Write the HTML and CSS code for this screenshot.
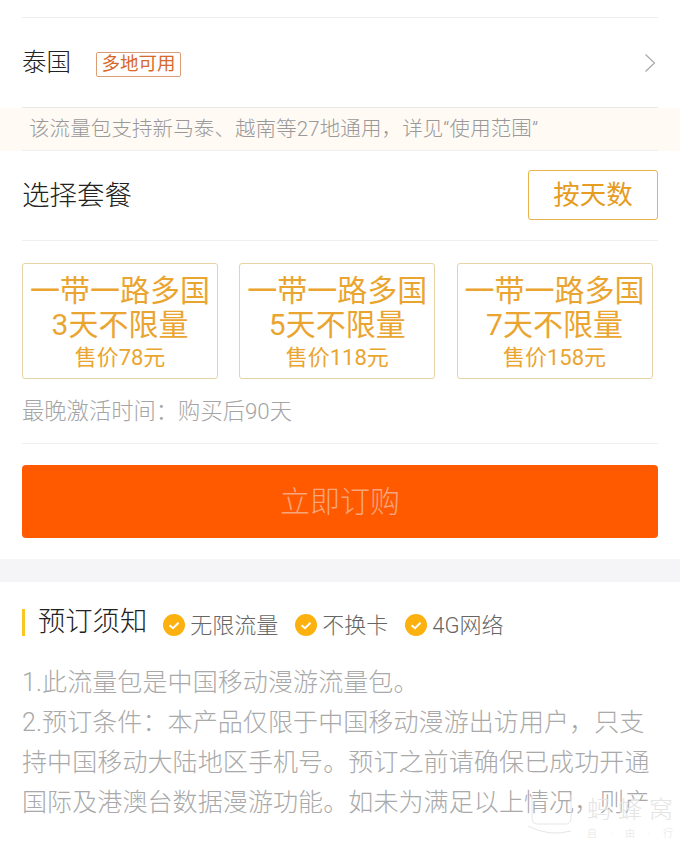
FILE: index.html
```html
<!DOCTYPE html>
<html lang="zh-CN">
<head>
<meta charset="utf-8">
<title>预订</title>
<link rel="stylesheet" href="styles.css">
</head>
<body>
<main class="page">
  <section class="panel">
    <div class="rule-top"></div>
    <div class="dest">
      <span class="dest-name">泰国</span>
      <span class="dest-tag">多地可用</span>
      <svg class="chev" width="12" height="20" viewBox="0 0 12 20"><path d="M1.5 1.5 10.5 10 1.5 18.5" fill="none" stroke="#a8a8a8" stroke-width="1.2"/></svg>
    </div>
    <div class="notice"><span>该流量包支持新马泰、越南等27地通用，详见“使用范围”</span></div>
    <div class="choose">
      <span class="choose-title">选择套餐</span>
      <span class="choose-btn">按天数</span>
    </div>
    <div class="plans">
      <div class="plan"><div class="plan-l1">一带一路多国</div><div class="plan-l2">3天不限量</div><div class="plan-l3">售价78元</div></div>
      <div class="plan"><div class="plan-l1">一带一路多国</div><div class="plan-l2">5天不限量</div><div class="plan-l3">售价118元</div></div>
      <div class="plan"><div class="plan-l1">一带一路多国</div><div class="plan-l2">7天不限量</div><div class="plan-l3">售价158元</div></div>
    </div>
    <div class="latest">最晚激活时间：购买后90天</div>
    <div class="order-wrap"><div class="order">立即订购</div></div>
  </section>
  <div class="gap"></div>
  <section class="notes">
    <div class="notes-head">
      <span class="notes-title">预订须知</span>
      <span class="feat"><svg class="tick" viewBox="0 0 22 22"><circle cx="11" cy="11" r="11" fill="#fdb10f"/><path d="M6.5 11.2 10 14.2 15.5 8.8" fill="none" stroke="#fff" stroke-width="2"/></svg>无限流量</span>
      <span class="feat"><svg class="tick" viewBox="0 0 22 22"><circle cx="11" cy="11" r="11" fill="#fdb10f"/><path d="M6.5 11.2 10 14.2 15.5 8.8" fill="none" stroke="#fff" stroke-width="2"/></svg>不换卡</span>
      <span class="feat"><svg class="tick" viewBox="0 0 22 22"><circle cx="11" cy="11" r="11" fill="#fdb10f"/><path d="M6.5 11.2 10 14.2 15.5 8.8" fill="none" stroke="#fff" stroke-width="2"/></svg>4G网络</span>
    </div>
    <p class="notes-text">1.此流量包是中国移动漫游流量包。<br>2.预订条件：本产品仅限于中国移动漫游出访用户，只支持中国移动大陆地区手机号。预订之前请确保已成功开通国际及港澳台数据漫游功能。如未为满足以上情况，则产</p>
  </section>
  <div class="mark">
    <svg class="mark-logo" width="46" height="44" viewBox="0 0 46 44"><path d="M5 2V26Q5 30 9 31H40Q44 30 44 26V2M1 33Q22 44 44 38" fill="none" stroke="#e6e6e6" stroke-width="1"/></svg>
    <div class="mark-words"><div class="mark-name">蚂蜂窝</div><div class="mark-sub"><span>自</span><span>·</span><span>由</span><span>·</span><span>行</span></div></div>
  </div>
</main>
</body>
</html>
```
FILE: styles.css
```css
* { box-sizing: border-box; }
html, body { margin: 0; padding: 0; background: #fff; }
body { font-family: Roboto, "Noto Sans CJK SC", sans-serif; font-weight: 300; }
.page { position: relative; width: 680px; height: 846px; overflow: hidden; }
.panel { padding-top: 17px; }
.rule-top { height: 1px; margin: 0 22px; background: #eeeeee; }
.dest { display: flex; align-items: center; height: 90px; margin: 0 22px; border-bottom: 1px solid #e9e9e9; }
.dest-name { font-size: 24.5px; color: #222; width: 74px; line-height: 30px; }
.dest-tag { width: 85px; height: 25px; border: 1px solid #dd9d74; border-radius: 2px; color: #d7672b; font-size: 18.5px; line-height: 23px; text-align: center; margin-top: 4px; font-weight: 400; }
.chev { margin-left: auto; margin-right: 2px; }
.notice { height: 43px; background: #fffaf4; padding: 0 22px; }
.notice span { display: block; height: 43px; border-bottom: 1px solid #eeeeee; padding-left: 7px; font-size: 20.5px; letter-spacing: 0.1px; line-height: 42px; color: #999; white-space: nowrap; }
.choose { display: flex; align-items: center; justify-content: space-between; height: 90px; margin: 0 22px; border-bottom: 1px solid #eee; }
.choose-title { font-size: 27.5px; color: #222; margin-top: -6px; }
.choose-btn { width: 130px; height: 50px; border: 1px solid #e5b24d; border-radius: 3px; color: #e59c1f; font-size: 26.5px; line-height: 48px; text-align: center; margin-top: -2px; font-weight: 400; }
.plans { display: flex; gap: 21.25px; padding: 22px 22px 0; }
.plan { width: 196px; height: 116px; border: 1px solid #e6d4a6; border-radius: 3px; text-align: center; color: #eaa530; white-space: nowrap; padding-top: 9px; font-weight: 400; }
.plan-l1 { font-size: 30px; line-height: 35px; }
.plan-l2 { font-size: 30px; line-height: 33px; }
.plan-l3 { font-size: 22px; line-height: 30px; margin-top: 2px; }
.latest { margin: 0 22px; height: 65px; border-bottom: 1px solid #eee; font-size: 22.3px; line-height: 64px; color: #a5a5a5; }
.order-wrap { padding: 21px 22px 0; }
.order { height: 73px; background: #ff5a00; border-radius: 4px; color: #f8a57c; font-size: 30px; line-height: 73px; text-align: center; }
.gap { height: 23px; margin-top: 21px; background: #f5f5f8; }
.notes { padding: 0 22px; }
.notes-head { display: flex; align-items: center; height: 80px; margin-bottom: 1px; }
.notes-title { border-left: 3px solid #f9c721; padding-left: 13px; font-size: 27.3px; line-height: 27px; color: #222; margin-right: 16px; }
.feat { display: flex; align-items: center; font-size: 22px; color: #666; margin-right: 17px; margin-top: 2px; }
.tick { width: 22px; height: 22px; margin-right: 5px; margin-top: 4px; }
.notes-text { margin: 0; font-size: 25px; letter-spacing: 0.1px; line-height: 40px; color: #a9a9a9; }
.mark { position: absolute; left: 527px; top: 793px; display: flex; gap: 14px; pointer-events: none; }
.mark-words { width: 86px; color: #e4e4e4; padding-top: 2px; }
.mark-name { font-size: 24px; line-height: 30px; letter-spacing: 7px; white-space: nowrap; }
.mark-sub { display: flex; justify-content: space-between; font-size: 10px; line-height: 14px; margin-top: 2px; }
```
